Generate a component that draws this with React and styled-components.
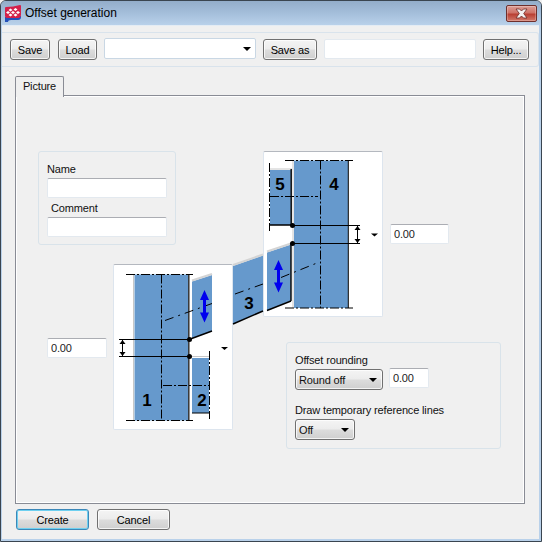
import React from 'react';
import styled, { createGlobalStyle } from 'styled-components';

const GlobalStyle = createGlobalStyle`
  html, body { margin: 0; padding: 0; background: #f0f0f0; }
  body { font-family: "Liberation Sans", Arial, sans-serif; font-size: 11px; letter-spacing: -0.15px; color: #111; }
  * { box-sizing: border-box; }
`;

const DASH = '9 2 2 2';
const SLANT_DASH = '9 5 2 5';
const BLUE = '#6699cc';

const Window = styled.div`
  width: 542px;
  height: 542px;
  display: flex;
  flex-direction: column;
  background: #b9d1ea;
  border: 1px solid #3a4550;
  border-radius: 6px 6px 0 0;
  overflow: hidden;
`;

const TitleBar = styled.div`
  height: 24px;
  flex: none;
  display: flex;
  align-items: center;
  padding: 0 4px 0 4px;
  gap: 3px;
  background: linear-gradient(#93adca, #a6c0dc 55%, #b9d1ea);
`;

const TitleText = styled.span`
  flex: 1;
  font-size: 12px;
  letter-spacing: 0;
  color: #000;
`;

const CloseBox = styled.div`
  width: 31px;
  height: 17px;
  border: 1px solid #6e2f2c;
  border-radius: 2px;
  display: flex;
  align-items: center;
  justify-content: center;
  background: linear-gradient(#dc9e96, #cf7267 45%, #b93f33 55%, #d2796a);
  box-shadow: inset 0 0 0 1px rgba(255, 255, 255, 0.25);
`;

const Client = styled.div`
  flex: 1;
  margin: 0 2px 2px 1px;
  display: flex;
  flex-direction: column;
  background: #f0f0f0;
  border-top: 1px solid #e4ecf4;
  padding: 6px 0 0 0;
`;

const Toolbar = styled.div`
  height: 35px;
  flex: none;
  display: flex;
  align-items: center;
  padding: 0 8px 0 8px;
  border-top: 1px solid #d9e3ec;
  border-bottom: 1px solid #d9e3ec;
  border-right: 1px solid #d9e3ec;
  border-radius: 0 3px 3px 0;
`;

const Button = styled.button`
  height: 21px;
  width: ${p => p.$w}px;
  margin-left: ${p => p.$gap || 0}px;
  flex: none;
  padding: 0;
  font: inherit;
  letter-spacing: inherit;
  color: #000;
  border: 1px solid ${p => (p.$focus ? '#3c87b8' : '#707070')};
  border-radius: 3px;
  background: linear-gradient(#f4f4f4, #ececec 48%, #dcdcdc 52%, #cfcfcf);
  box-shadow: inset 0 0 0 1px ${p => (p.$focus ? '#6ed0f0' : 'rgba(255, 255, 255, 0.75)')};
`;

const ComboBox = styled.div`
  width: 152px;
  height: 21px;
  margin-left: 7px;
  margin-top: -2px;
  flex: none;
  display: flex;
  align-items: center;
  justify-content: flex-end;
  padding-right: 4px;
  background: #fff;
  border: 1px solid #c9d7e4;
  border-radius: 2px;
`;

const Arrow = styled.span`
  display: block;
  width: 0;
  height: 0;
  border-left: 4px solid transparent;
  border-right: 4px solid transparent;
  border-top: 4px solid #000;
`;

const Field = styled.input`
  display: block;
  width: ${p => p.$w}px;
  height: 20px;
  padding: 0 0 0 3px;
  font: inherit;
  letter-spacing: inherit;
  color: #222;
  background: #fff;
  outline: none;
  border: 1px solid #e3e9ef;
  border-top-color: #abadb3;
  border-radius: 2px;
`;

const ToolbarField = styled(Field)`
  margin-left: 7px;
  margin-top: -2px;
  flex: none;
  border-color: #e3e9ef;
`;

const RowField = styled(Field)`
  margin-top: -1px;
`;

const TabArea = styled.div`
  flex: 1;
  display: flex;
  flex-direction: column;
  padding: 9px 13px 0 13px;
`;

const TabStrip = styled.div`
  height: 20px;
  flex: none;
  display: flex;
  position: relative;
  z-index: 1;
  margin-bottom: -1px;
`;

const Tab = styled.div`
  width: 49px;
  height: 21px;
  display: flex;
  align-items: center;
  justify-content: center;
  background: #f0f0f0;
  border: 1px solid #898c95;
  border-bottom: none;
  border-radius: 2px 2px 0 0;
  padding-bottom: 2px;
`;

const TabPage = styled.div`
  width: 510px;
  height: 409px;
  flex: none;
  position: relative;
  background: #f0f0f0;
  border: 1px solid #898c95;
  box-shadow: inset 0 0 0 1px #fff;
`;

const Group = styled.div`
  position: absolute;
  border: 1px solid #d9e3ea;
  border-radius: 3px;
`;

/* the tab page is a free canvas: each block sits where the drawing needs it */
const NameGroup = styled(Group)`
  left: 22px;
  top: 55px;
  width: 138px;
  height: 94px;
  padding: 9px 8px 0 8px;
`;

const RoundingGroup = styled(Group)`
  left: 270px;
  top: 246px;
  width: 215px;
  height: 107px;
  padding: 9px 8px 0 8px;
`;

const Label = styled.div`
  height: 16px;
  line-height: 16px;
  white-space: nowrap;
  margin-left: ${p => p.$indent || 0}px;
  margin-top: ${p => p.$above || 0}px;
  margin-bottom: ${p => p.$below || 0}px;
`;

const Spaced = styled.div`
  height: ${p => p.$h}px;
`;

const Row = styled.div`
  display: flex;
  align-items: flex-start;
  gap: 6px;
`;

const Select = styled.div`
  width: ${p => p.$w}px;
  height: 21px;
  display: flex;
  align-items: center;
  justify-content: space-between;
  padding: 0 5px 0 3px;
  flex: none;
  border: 1px solid #707070;
  border-radius: 3px;
  background: linear-gradient(#f4f4f4, #ececec 48%, #dcdcdc 52%, #cfcfcf);
  box-shadow: inset 0 0 0 1px rgba(255, 255, 255, 0.75);
`;

const Figure = styled.div`
  position: absolute;
  background: #fff;
  border: 1px solid #dde5ee;
  border-top-color: #b4b8bf;
  border-radius: 2px;
  svg { display: block; position: absolute; left: -1px; top: -1px; overflow: visible; }
`;

const LowerFigure = styled(Figure)`
  left: 97px;
  top: 168px;
  width: 120px;
  height: 166px;
`;

const UpperFigure = styled(Figure)`
  left: 247px;
  top: 55px;
  width: 120px;
  height: 166px;
`;

const Bridge = styled.svg`
  position: absolute;
  left: 217px;
  top: 155px;
  width: 30px;
  height: 80px;
  overflow: visible;
`;

const LeftOffset = styled(Field)`
  position: absolute;
  left: 31px;
  top: 242px;
`;

const RightOffset = styled(Field)`
  position: absolute;
  left: 374px;
  top: 128px;
`;

const Footer = styled.div`
  flex: none;
  display: flex;
  padding: 5px 0 0 0;
`;

const AppIcon = () => (
  <svg width="17" height="17" viewBox="0 0 17 17">
    <path d="M0 12h6v-1h10v1q0 3-3 3H6q-3 0-3 2H0z" fill="#2450b8" />
    <path d="M0 3q0-1 1-1 7 0 14-2 1 0 1 1v9q0 2-2 3H2q-2 0-2-2z" fill="#d4204a" />
    <g fill="#fff">
      <path d="M3.500 5l2-1.500L7.500 5l-2 1.500zM8.500 4.500l2-1.500 2 1.500-2 1.500zM6 7.500l2-1.500 2 1.500L8 9zM1 7.500l2-1.500 2 1.500L3 9zM11 7.500L13 6l2 1.500L13 9zM3.500 10l2-1.500 2 1.500-2 1.500zM8.500 10l2-1.500 2 1.500-2 1.500z" />
    </g>
  </svg>
);

const CloseIcon = () => (
  <svg width="15" height="11" viewBox="0 0 15 11">
    <path d="M2 1h3.500l2 2L9.500 1H13L9.700 5.500 13 10H9.500l-2-2-2 2H2l3.300-4.500z" fill="#f4f0f0" stroke="#6b2a26" strokeWidth="0.8" />
  </svg>
);

// double headed blue arrow of the flap pieces
const BlueArrow = ({ x, top, bottom }) => (
  <path
    d={`M${x} ${top}l4.500 10h-3v${bottom - top - 20}h3L${x} ${bottom}l-4.500-10h3v-${bottom - top - 20}h-3z`}
    fill="#0000ee"
  />
);

const OffsetDim = ({ x, y1, y2 }) => (
  <g>
    <line x1={x} x2={x} y1={y1} y2={y2} stroke="#000" />
    <path d={`M${x} ${y1}l3 4h-6zM${x} ${y2}l3-4h-6z`} fill="#000" />
  </g>
);

const PartNumber = ({ x, y, children }) => (
  <text x={x} y={y} textAnchor="middle" fontFamily="'Liberation Sans', sans-serif" fontWeight="700" fontSize="17" letterSpacing="0" fill="#000">
    {children}
  </text>
);

const Line = ({ d, dash, color = '#000', w = 1 }) => (
  <path d={d} fill="none" stroke={color} strokeWidth={w} strokeDasharray={dash} />
);

const LowerDrawing = () => (
  <svg width="120" height="166" viewBox="113 265 120 166">
    <rect x="134.500" y="275.500" width="54" height="146" fill={BLUE} />
    <Line d="M133.500 275V422" color="#c8c8c8" />
    <Line d="M188.800 275V422" color="#333" w={1.5} />
    <Line d="M126 275.500H193M126 421.500H193M161.500 275.500V421.500" dash={DASH} />
    <path d="M192 282.500L212 276V332L192 339.500z" fill={BLUE} />
    <Line d="M192 281.500L212 275" color="#d4d4d4" w={2} />
    <Line d="M189 340.500L212 332" w={1.5} />
    <Line d="M165 321.500L212 304.500" dash={SLANT_DASH} />
    <BlueArrow x={204.500} top={291} bottom={323.500} />
    <rect x="192" y="359" width="17" height="55" fill={BLUE} />
    <Line d="M191 357.500H209" color="#c8c8c8" />
    <Line d="M192 414H209" />
    <Line d="M209.500 352V420M163 386.500H209" dash={DASH} />
    <Line d="M119 340.500H189M119 357.500H189" />
    <OffsetDim x={122.500} y1={341} y2={357} />
    <circle cx="189.500" cy="340.500" r="2.500" />
    <circle cx="189.500" cy="357.500" r="2.500" />
    <path d="M221 348h7l-3.500 3z" fill="#000" />
    <PartNumber x={147} y={407}>1</PartNumber>
    <PartNumber x={202} y={407}>2</PartNumber>
  </svg>
);

const UpperDrawing = () => (
  <svg width="120" height="166" viewBox="263 152 120 166">
    <rect x="294" y="161.500" width="54" height="147.500" fill={BLUE} />
    <Line d="M293 161V309" color="#c8c8c8" />
    <Line d="M348.300 161V309" />
    <Line d="M285 161.500H353M285 309H353M320.500 161.500V309" dash={DASH} />
    <rect x="270" y="171" width="21" height="55" fill={BLUE} />
    <Line d="M270 170H292" color="#c8c8c8" />
    <Line d="M291.200 170V226M269 226H292" w={1.4} />
    <Line d="M269.500 164V232M270 197.500H318" dash={DASH} />
    <path d="M267 253.500L291 245.500V301.500L267 311.500z" fill={BLUE} />
    <Line d="M267 252.500L291 244.500" color="#d4d4d4" w={2} />
    <Line d="M267 311.500L291 302M291 245V302" w={1.4} />
    <Line d="M281 278.500L317 264" dash={SLANT_DASH} />
    <BlueArrow x={278.500} top={261} bottom={293.500} />
    <Line d="M292 226.500H360M292 244.500H360" />
    <OffsetDim x={357.500} y1={227} y2={244} />
    <circle cx="292.500" cy="226.500" r="2.500" />
    <circle cx="292.500" cy="244.500" r="2.500" />
    <path d="M371 234.500h7l-3.500 3z" fill="#000" />
    <PartNumber x={334} y={191}>4</PartNumber>
    <PartNumber x={280} y={191}>5</PartNumber>
  </svg>
);

const BridgeDrawing = () => (
  <Bridge viewBox="233 252 30 80">
    <path d="M233 267L263 256.500V312L233 325z" fill={BLUE} />
    <Line d="M233 266L263 255.500" color="#d4d4d4" w={2} />
    <Line d="M233 325L263 312" w={1.5} />
    <Line d="M235 295L263 285" dash={SLANT_DASH} />
    <PartNumber x={249} y={310}>3</PartNumber>
  </Bridge>
);

export default function App() {
  return (
    <>
      <GlobalStyle />
      <Window>
        <TitleBar>
          <AppIcon />
          <TitleText>Offset generation</TitleText>
          <CloseBox><CloseIcon /></CloseBox>
        </TitleBar>
        <Client>
          <Toolbar>
            <Button $w={40}>Save</Button>
            <Button $w={39} $gap={8}>Load</Button>
            <ComboBox><Arrow /></ComboBox>
            <Button $w={54} $gap={7}>Save as</Button>
            <ToolbarField $w={152} readOnly />
            <Button $w={46} $gap={7}>Help...</Button>
          </Toolbar>
          <TabArea>
            <TabStrip><Tab>Picture</Tab></TabStrip>
            <TabPage>
              <NameGroup>
                <Label $below={1}>Name</Label>
                <Field $w={120} readOnly />
                <Label $indent={4} $above={2} $below={1}>Comment</Label>
                <Field $w={120} readOnly />
              </NameGroup>
              <LowerFigure><LowerDrawing /></LowerFigure>
              <UpperFigure><UpperDrawing /></UpperFigure>
              <BridgeDrawing />
              <LeftOffset $w={60} readOnly value="0.00" />
              <RightOffset $w={59} readOnly value="0.00" />
              <RoundingGroup>
                <Label $below={1}>Offset rounding</Label>
                <Row>
                  <Select $w={88}>Round off<Arrow /></Select>
                  <RowField $w={40} readOnly value="0.00" />
                </Row>
                <Spaced $h={12} />
                <Label $below={1}>Draw temporary reference lines</Label>
                <Select $w={60}>Off<Arrow /></Select>
              </RoundingGroup>
            </TabPage>
            <Footer>
              <Button $w={73} $focus $gap={1}>Create</Button>
              <Button $w={73} $gap={8}>Cancel</Button>
            </Footer>
          </TabArea>
        </Client>
      </Window>
    </>
  );
}
